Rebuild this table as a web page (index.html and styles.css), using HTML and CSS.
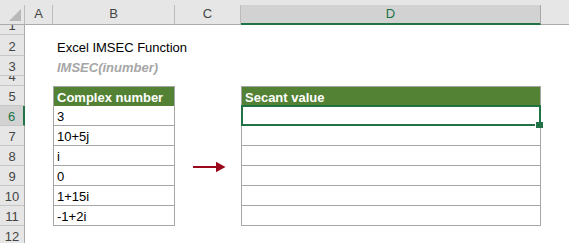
FILE: index.html
```html
<!DOCTYPE html>
<html lang="en">
<head>
  <meta charset="UTF-8">
  <title>Excel IMSEC Function</title>
  <link rel="stylesheet" href="styles.css">
</head>
<body>
  <div class="sheet">
    <div class="heads">
      <div class="ch corner">
        <svg class="tri" width="14" height="14" viewBox="0 0 14 14"><polygon points="13,1 13,13 1,13" fill="#b8b8b8"/></svg>
      </div>
      <div class="ch">A</div>
      <div class="ch">B</div>
      <div class="ch">C</div>
      <div class="ch sel">D</div>
      <div class="ch rest"></div>
    </div>

    <div class="row h10">
      <div class="rh">1</div><div class="c"></div><div class="c"></div><div class="c"></div><div class="c"></div><div class="c"></div>
    </div>
    <div class="row h21">
      <div class="rh">2</div><div class="c"></div><div class="c title">Excel IMSEC Function</div><div class="c"></div><div class="c"></div><div class="c"></div>
    </div>
    <div class="row">
      <div class="rh">3</div><div class="c"></div><div class="c syntax">IMSEC(inumber)</div><div class="c"></div><div class="c"></div><div class="c"></div>
    </div>
    <div class="row h10">
      <div class="rh">4</div><div class="c"></div><div class="c"></div><div class="c"></div><div class="c"></div><div class="c"></div>
    </div>
    <div class="row">
      <div class="rh">5</div><div class="c"></div><div class="c hd">Complex number</div><div class="c"></div><div class="c hd">Secant value</div><div class="c"></div>
    </div>
    <div class="row">
      <div class="rh sel">6</div><div class="c"></div><div class="c t">3</div><div class="c"></div><div class="c t cur"></div><div class="c"></div>
    </div>
    <div class="row">
      <div class="rh">7</div><div class="c"></div><div class="c t">10+5j</div><div class="c"></div><div class="c t"></div><div class="c"></div>
    </div>
    <div class="row">
      <div class="rh">8</div><div class="c"></div><div class="c t">i</div><div class="c"></div><div class="c t"></div><div class="c"></div>
    </div>
    <div class="row">
      <div class="rh">9</div><div class="c"></div><div class="c t">0</div><div class="c"></div><div class="c t"></div><div class="c"></div>
    </div>
    <div class="row">
      <div class="rh">10</div><div class="c"></div><div class="c t">1+15i</div><div class="c"></div><div class="c t"></div><div class="c"></div>
    </div>
    <div class="row">
      <div class="rh">11</div><div class="c"></div><div class="c t">-1+2i</div><div class="c"></div><div class="c t"></div><div class="c"></div>
    </div>
    <div class="row">
      <div class="rh">12</div><div class="c"></div><div class="c"></div><div class="c"></div><div class="c"></div><div class="c"></div>
    </div>

    <!-- arrow shape sitting on the sheet -->
    <svg class="arrow" width="33" height="12" viewBox="0 0 33 12">
      <rect x="0" y="5" width="24" height="2" fill="#9b0a1c"/>
      <polygon points="23,0.7 32.5,6 23,11.3" fill="#9b0a1c"/>
    </svg>
  </div>
</body>
</html>
```

FILE: styles.css
```css
* { box-sizing: border-box; }

body {
  margin: 0;
  background: #fff;
  font-family: "Liberation Sans", Arial, sans-serif;
  font-size: 13px;
  color: #000;
}

.sheet {
  position: relative;
  width: 569px;
  height: 243px;
  overflow: hidden;
}

/* column headers */
.heads {
  display: grid;
  grid-template-columns: 25px 28px 122px 66px 300px 1fr;
  height: 25px;
  padding-top: 5px;
  background: #e6e6e6;
}
.ch {
  border-right: 1px solid #bcbcbc;
  border-bottom: 1px solid #ababab;
  text-align: center;
  line-height: 18px;
  color: #444;
}
.ch.sel {
  background: #d2d2d2;
  border-right-color: #a8a8a8;
  border-bottom: 2px solid #217346;
  color: #217346;
}
.ch.rest { border-right: 0; }
.corner { position: relative; }
.tri { position: absolute; right: 2px; bottom: 2px; }

/* rows */
.row {
  display: grid;
  grid-template-columns: 25px 28px 122px 66px 300px 1fr;
  height: 20px;
}
.row.h10 { height: 10px; }
.row.h21 { height: 21px; }

.rh {
  display: flex;
  justify-content: center;
  align-items: flex-end;
  overflow: hidden;
  line-height: 16px;
  background: #e6e6e6;
  border-right: 1px solid #ababab;
  border-bottom: 1px solid #c6c6c6;
  color: #444;
}
.rh.sel {
  background: #d2d2d2;
  border-right: 2px solid #217346;
  color: #217346;
}

.c {
  display: flex;
  align-items: flex-end;
  line-height: 16px;
  padding-left: 4px;
  white-space: nowrap;
}

.title { color: #000; }
.syntax {
  color: #a6a6a6;
  font-weight: bold;
  font-style: italic;
}

.hd {
  background: #548235;
  color: #fff;
  font-weight: bold;
  border: 1px solid #a6a6a6;
  border-bottom: 0;
  padding-left: 3px;
}
.t {
  border: 1px solid #a6a6a6;
  border-top: 0;
  padding-left: 3px;
}

/* active cell */
.cur { position: relative; }
.cur::after {
  content: "";
  position: absolute;
  left: -1px;
  top: -1px;
  right: -1px;
  bottom: -1px;
  border: 2px solid #217346;
}
.cur::before {
  content: "";
  position: absolute;
  right: -3px;
  bottom: -3px;
  width: 7px;
  height: 6px;
  background: #217346;
  border-left: 1px solid #fff;
  z-index: 1;
}

.arrow {
  position: absolute;
  left: 193px;
  top: 161px;
}
```
